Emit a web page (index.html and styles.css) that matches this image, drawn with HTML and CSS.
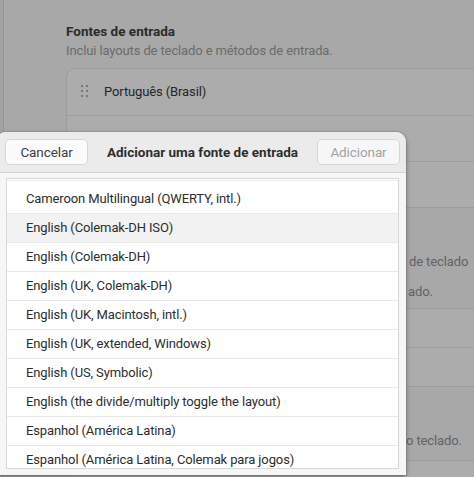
FILE: index.html
```html
<!DOCTYPE html>
<html lang="pt-BR">
<head>
<meta charset="utf-8">
<title>Fontes de entrada</title>
<link rel="stylesheet" href="styles.css">
</head>
<body>
<div class="window">
  <div class="sidebar"></div>
  <main class="content">
    <h2 class="heading">Fontes de entrada</h2>
    <p class="subtitle">Inclui layouts de teclado e métodos de entrada.</p>
    <div class="card">
      <div class="row">
        <svg class="handle" width="8" height="13" viewBox="0 0 8 13"><g fill="#777"><rect x="0" y="0" width="2" height="2"/><rect x="5" y="0" width="2" height="2"/><rect x="0" y="5" width="2" height="2"/><rect x="5" y="5" width="2" height="2"/><rect x="0" y="10" width="2" height="2"/><rect x="5" y="10" width="2" height="2"/></g></svg>
        <span class="row-label">Português (Brasil)</span>
      </div>
      <div class="row">
        <svg class="handle" width="8" height="13" viewBox="0 0 8 13"><g fill="#777"><rect x="0" y="0" width="2" height="2"/><rect x="5" y="0" width="2" height="2"/><rect x="0" y="5" width="2" height="2"/><rect x="5" y="5" width="2" height="2"/><rect x="0" y="10" width="2" height="2"/><rect x="5" y="10" width="2" height="2"/></g></svg>
      </div>
      <div class="row"></div>
    </div>

    <section class="section">
      <p class="tail t1">de teclado</p>
      <p class="tail t2">ado.</p>
      <div class="card card2">
        <div class="row r38"></div>
        <div class="row r39"></div>
      </div>
      <p class="tail t3">o teclado.</p>
      <div class="card card3">
        <div class="row"></div>
      </div>
    </section>
  </main>
</div>

<div class="dialog">
  <header class="dlg-header">
    <button class="btn">Cancelar</button>
    <div class="dlg-title">Adicionar uma fonte de entrada</div>
    <button class="btn disabled">Adicionar</button>
  </header>
  <div class="dlg-body">
    <div class="list">
      <div class="list-top"></div>
      <div class="item">Cameroon Multilingual (QWERTY, intl.)</div>
      <div class="item hover">English (Colemak-DH ISO)</div>
      <div class="item">English (Colemak-DH)</div>
      <div class="item">English (UK, Colemak-DH)</div>
      <div class="item">English (UK, Macintosh, intl.)</div>
      <div class="item">English (UK, extended, Windows)</div>
      <div class="item">English (US, Symbolic)</div>
      <div class="item">English (the divide/multiply toggle the layout)</div>
      <div class="item">Espanhol (América Latina)</div>
      <div class="item">Espanhol (América Latina, Colemak para jogos)</div>
    </div>
  </div>
</div>
</body>
</html>
```
FILE: styles.css
```css
* { box-sizing: border-box; }
html, body { margin: 0; padding: 0; }
body {
  width: 474px;
  height: 477px;
  overflow: hidden;
  position: relative;
  background: #a8a8a8;
  font-family: Roboto, "Noto Sans", sans-serif;
  font-size: 13px;
  letter-spacing: -0.12px;
}
.window { display: flex; height: 100%; overflow: hidden; }
.sidebar {
  flex: none;
  width: 4px;
  background: #a3a3a3;
  border-right: 1px solid #969696;
}
.content {
  flex: none;
  width: 470px;
  padding: 21px 0 0 62px;
}
.heading {
  margin: 0;
  font-size: 13.5px;
  letter-spacing: 0;
  font-weight: 700;
  line-height: 20px;
  color: #2b2b2b;
}
.subtitle {
  margin: 0 0 7px;
  line-height: 20px;
  color: #6b6b6b;
}
.card {
  border: 1px solid #9c9c9c;
  border-right: none;
  border-radius: 9px 0 0 9px;
  background: #acacac;
  margin-right: -40px;
}
.row {
  height: 46px;
  display: flex;
  align-items: center;
  gap: 15px;
  padding-left: 14px;
  border-top: 1px solid #9c9c9c;
}
.row:first-child { border-top: none; }
.handle { flex: none; margin-top: -1px; }
.row-label { color: #262626; margin-top: -2px; }

.tail {
  margin: 0;
  line-height: 20px;
  color: #636363;
  white-space: nowrap;
}
.t1 { margin: 44px 0 0 343px; }
.t2 { margin: 10px 0 0 342px; }
.t3 { margin: 44px 0 0 340px; }
.card2 { margin-top: 6px; }
.r38 { height: 38px; }
.r39 { height: 39px; }
.card3 { margin-top: 9px; }

.dialog {
  position: absolute;
  left: -4px;
  top: 132px;
  width: 410px;
  height: 343px;
  background: #f6f6f6;
  border-radius: 10px 10px 0 0;
  box-shadow: 0 2px 5px rgba(0, 0, 0, 0.35), 0 0 0 1px rgba(0, 0, 0, 0.08);
  display: flex;
  flex-direction: column;
  overflow: hidden;
}
.dlg-header {
  flex: none;
  height: 41px;
  display: flex;
  align-items: flex-start;
  padding: 7px 6px 0 9px;
  background: #ebebeb;
  border-bottom: 1px solid #d3d3d3;
}
.btn {
  flex: none;
  width: 83px;
  height: 26px;
  padding: 0;
  font-family: inherit;
  font-size: 13.5px;
  letter-spacing: -0.1px;
  color: #3e3e3e;
  background: #fbfbfb;
  border: 1px solid #d6d6d6;
  border-radius: 5px;
}
.btn.disabled { color: #a3a3a3; background: #f7f7f7; }
.dlg-title {
  flex: 1;
  text-align: center;
  font-weight: 700;
  font-size: 13.5px;
  letter-spacing: 0;
  line-height: 26px;
  color: #2e2e2e;
}
.dlg-body {
  flex: 1;
  padding: 5px 7px 5px 10px;
  min-height: 0;
}
.list {
  height: 291px;
  overflow: hidden;
  background: #fff;
  border: 1px solid #d8d8d8;
}
.list-top {
  height: 5px;
  margin-top: 1px;
  border-top: 1px solid #ececec;
}
.item {
  height: 29px;
  line-height: 28px;
  padding-left: 19px;
  color: #2d2d2d;
  border-bottom: 1px solid #e8e8e8;
  white-space: nowrap;
}
.item.hover { background: #f2f2f2; }
```
